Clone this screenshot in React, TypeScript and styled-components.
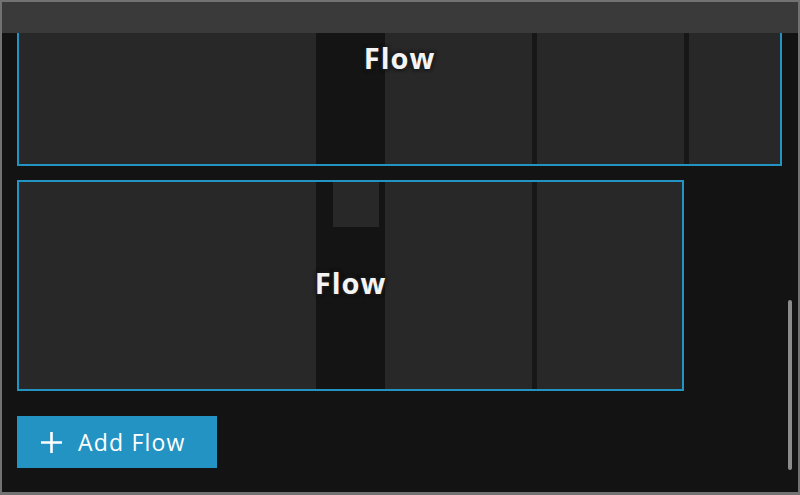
import React, { useLayoutEffect, useRef } from "react";
import styled, { createGlobalStyle } from "styled-components";

const Global = createGlobalStyle`
  html, body { margin: 0; padding: 0; background: #131313; }
  body { font-family: "Open Sans", "Liberation Sans", sans-serif; }
  * { box-sizing: border-box; }
`;

const Frame = styled.div`
  width: 800px;
  height: 495px;
  border: 2px solid #727272;
  border-bottom-width: 3px;
  background: #131313;
  display: flex;
  flex-direction: column;
  overflow: hidden;
`;

const TopBar = styled.div`
  height: 31px;
  flex: none;
  background: #3a3a3a;
`;

const ViewportWrap = styled.div`
  position: relative;
  flex: 1;
  min-height: 0;
`;

const Scroller = styled.div`
  height: 100%;
  overflow-y: auto;
  scrollbar-width: none;
  &::-webkit-scrollbar { display: none; }
`;

const Content = styled.div`
  padding: 17px 16px 24px 15px;
  display: flex;
  flex-direction: column;
  align-items: flex-start;
  gap: 14px;
`;

const FlowBox = styled.div<{ $w: number }>`
  position: relative;
  width: ${(p) => p.$w}px;
  height: 211px;
  border: 2px solid #2393c4;
  background: #141414;
  display: flex;
  align-items: stretch;
`;

const Cell = styled.div<{ $w: number }>`
  flex: none;
  width: ${(p) => p.$w}px;
  background: #282828;
`;

const Sep = styled.div`
  flex: none;
  width: 5px;
  background: #171717;
`;

const Gutter = styled.div<{ $w: number }>`
  flex: none;
  width: ${(p) => p.$w}px;
  background: #141414;
  padding-left: 17px;
`;

const MiniCell = styled.div`
  width: 46px;
  height: 45px;
  background: #282828;
`;

const FlowLabel = styled.div`
  position: absolute;
  inset: 0;
  display: flex;
  align-items: center;
  justify-content: center;
  padding-bottom: 7px;
  color: #f4f4f4;
  font-family: "Open Sans", "Liberation Sans", sans-serif;
  font-weight: 700;
  font-size: 29px;
  letter-spacing: 1px;
  text-shadow: 0 0 3px #1c1c1c, 0 0 3px #1c1c1c, 0 0 4px #1c1c1c, 0 0 4px #1c1c1c;
  pointer-events: none;
`;

const AddButton = styled.button`
  margin-top: 11px;
  width: 200px;
  height: 52px;
  border: none;
  background: #2393c4;
  color: #ffffff;
  display: flex;
  align-items: center;
  gap: 15px;
  padding: 0 0 0 23px;
  font-family: "Open Sans", "Liberation Sans", sans-serif;
  font-size: 23px;
  font-weight: 400;
  letter-spacing: 1.2px;
  cursor: pointer;
`;

const Thumb = styled.div`
  position: absolute;
  right: 6px;
  top: 267px;
  width: 4px;
  height: 170px;
  border-radius: 2px;
  background: #8c8c8c;
`;

type Item =
  | { kind: "cell"; w: number }
  | { kind: "sep" }
  | { kind: "gutter"; w: number; mini?: boolean };

type FlowDef = { w: number; items: Item[] };

const wide: FlowDef = {
  w: 765,
  items: [
    { kind: "cell", w: 297 },
    { kind: "gutter", w: 69 },
    { kind: "cell", w: 147 },
    { kind: "sep" },
    { kind: "cell", w: 147 },
    { kind: "sep" },
    { kind: "cell", w: 91 },
  ],
};

const narrow: FlowDef = {
  w: 667,
  items: [
    { kind: "cell", w: 297 },
    { kind: "gutter", w: 69, mini: true },
    { kind: "cell", w: 147 },
    { kind: "sep" },
    { kind: "cell", w: 145 },
  ],
};

const flows: FlowDef[] = [wide, narrow, wide, wide, narrow];

function Flow({ def }: { def: FlowDef }) {
  return (
    <FlowBox $w={def.w}>
      {def.items.map((it, i) => {
        if (it.kind === "cell") return <Cell key={i} $w={it.w} />;
        if (it.kind === "sep") return <Sep key={i} />;
        return <Gutter key={i} $w={it.w}>{it.mini && <MiniCell />}</Gutter>;
      })}
      <FlowLabel>Flow</FlowLabel>
    </FlowBox>
  );
}

function PlusIcon() {
  return (
    <svg width="23" height="23" viewBox="0 0 23 23" aria-hidden="true">
      <path d="M11.5 1v21M1 11.5h21" stroke="#fff" strokeWidth="2.6" fill="none" />
    </svg>
  );
}

export default function App() {
  const ref = useRef<HTMLDivElement>(null);
  useLayoutEffect(() => {
    const el = ref.current;
    if (el) el.scrollTop = el.scrollHeight;
  }, []);
  return (
    <>
      <Global />
      <Frame>
        <TopBar />
        <ViewportWrap>
          <Scroller ref={ref}>
            <Content>
              {flows.map((f, i) => (
                <Flow key={i} def={f} />
              ))}
              <AddButton>
                <PlusIcon />
                Add Flow
              </AddButton>
            </Content>
          </Scroller>
          <Thumb />
        </ViewportWrap>
      </Frame>
    </>
  );
}
